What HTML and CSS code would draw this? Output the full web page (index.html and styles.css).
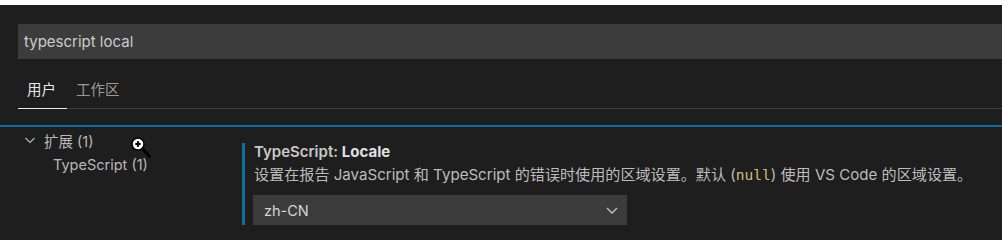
FILE: index.html
```html
<!DOCTYPE html>
<html lang="zh-CN">
<head>
    <meta charset="UTF-8">
    <title>Settings</title>
    <link rel="stylesheet" href="styles.css">
</head>
<body>
    <div class="topstrip"></div>

    <div class="search-wrap">
        <div class="search-box">typescript local</div>
    </div>

    <div class="tabs">
        <div class="tab active">用户</div>
        <div class="tab">工作区</div>
        <div class="tab-rest"></div>
    </div>

    <div class="divider"></div>

    <div class="content">
        <!-- Table of contents -->
        <div class="toc">
            <div class="toc-group">
                <svg class="chev" width="12" height="12" viewBox="0 0 12 12">
                    <path d="M1.5 4 L6 8.5 L10.5 4" fill="none" stroke="#b8b8b8" stroke-width="1.1"/>
                </svg>
                <span>扩展 (1)</span>
            </div>
            <div class="toc-item">TypeScript (1)</div>
        </div>

        <!-- Setting item -->
        <div class="setting">
            <div class="setting-title">TypeScript: <b>Locale</b></div>
            <div class="setting-desc">设置在报告 JavaScript 和 TypeScript 的错误时使用的区域设置。默认 (<code>null</code>) 使用 VS Code 的区域设置。</div>
            <div class="select">
                <span>zh-CN</span>
                <svg width="14" height="14" viewBox="0 0 14 14">
                    <path d="M2 5 L7 10 L12 5" fill="none" stroke="#c5c5c5" stroke-width="1.3"/>
                </svg>
            </div>
        </div>

        <!-- mouse cursor -->
        <svg class="cursor" width="24" height="24" viewBox="0 0 24 24">
            <line x1="10" y1="10" x2="18.5" y2="19.5" stroke="#000" stroke-width="3" stroke-linecap="round"/>
            <circle cx="7" cy="7" r="6" fill="#fff" stroke="#000" stroke-width="1.5"/>
            <path d="M4.3 7 H9.7 M7 4.3 V9.7" stroke="#000" stroke-width="2.2"/>
        </svg>
    </div>
</body>
</html>
```

FILE: styles.css
```css
body {
    margin: 0;
    padding: 0;
    background-color: #1e1e1e;
    font-family: 'Inter', 'Noto Sans CJK SC', sans-serif;
    color: #cccccc;
    width: 1002px;
    height: 240px;
    overflow: hidden;
    position: relative;
}
.topstrip {
    height: 5px;
    background-color: #ffffff;
}
.search-wrap {
    padding: 19px 0 0 18px;
}
.search-box {
    height: 35px;
    line-height: 35px;
    background-color: #3c3c3c;
    padding-left: 6px;
    font-size: 15px;
    color: #cccccc;
}
.tabs {
    display: flex;
    align-items: flex-end;
    margin-left: 18px;
    height: 50px;
}
.tab {
    font-size: 14.5px;
    color: #9a9a9a;
    padding: 0 10px 0 9px;
    height: 32px;
    line-height: 28px;
    border-bottom: 1px solid #3c3c3c;
}
.tab.active {
    color: #e7e7e7;
    padding-right: 11px;
    border-bottom: 1px solid #e7e7e7;
}
.tab-rest {
    flex: 1;
    border-bottom: 1px solid #3c3c3c;
}
.divider {
    margin-top: 16px;
    height: 2px;
    background-color: #0f6aad;
}
.content {
    display: flex;
}
.toc {
    width: 242px;
    padding-top: 1px;
    font-size: 14.5px;
    color: #b8b8b8;
}
.toc-group {
    display: flex;
    align-items: center;
    height: 24px;
    padding-left: 24px;
}
.toc-group .chev {
    margin-right: 8px;
}
.toc-item {
    height: 26px;
    line-height: 26px;
    padding-left: 53px;
}
.setting {
    margin-top: 16px;
    border-left: 3px solid #0e6e9c;
    padding-left: 9px;
    height: 82px;
}
.setting-title {
    font-size: 15px;
    font-weight: 600;
    color: #c8c8c8;
    line-height: 15px;
    padding-top: 1px;
}
.setting-title b {
    font-weight: 700;
    color: #e0e0e0;
}
.setting-desc {
    font-size: 15.1px;
    color: #bcbcbc;
    margin-top: 6px;
    line-height: 20px;
}
.setting-desc code {
    font-family: 'DejaVu Sans Mono', monospace;
    font-size: 14.5px;
    color: #d7ba7d;
}
.select {
    margin-top: 10px;
    margin-left: -1px;
    width: 374px;
    height: 30px;
    background-color: #3c3c3c;
    display: flex;
    align-items: center;
    justify-content: space-between;
    padding: 0 8px 0 11px;
    box-sizing: border-box;
    font-size: 14.5px;
    color: #d4d4d4;
}
.cursor {
    position: absolute;
    left: 131px;
    top: 137px;
}
```
